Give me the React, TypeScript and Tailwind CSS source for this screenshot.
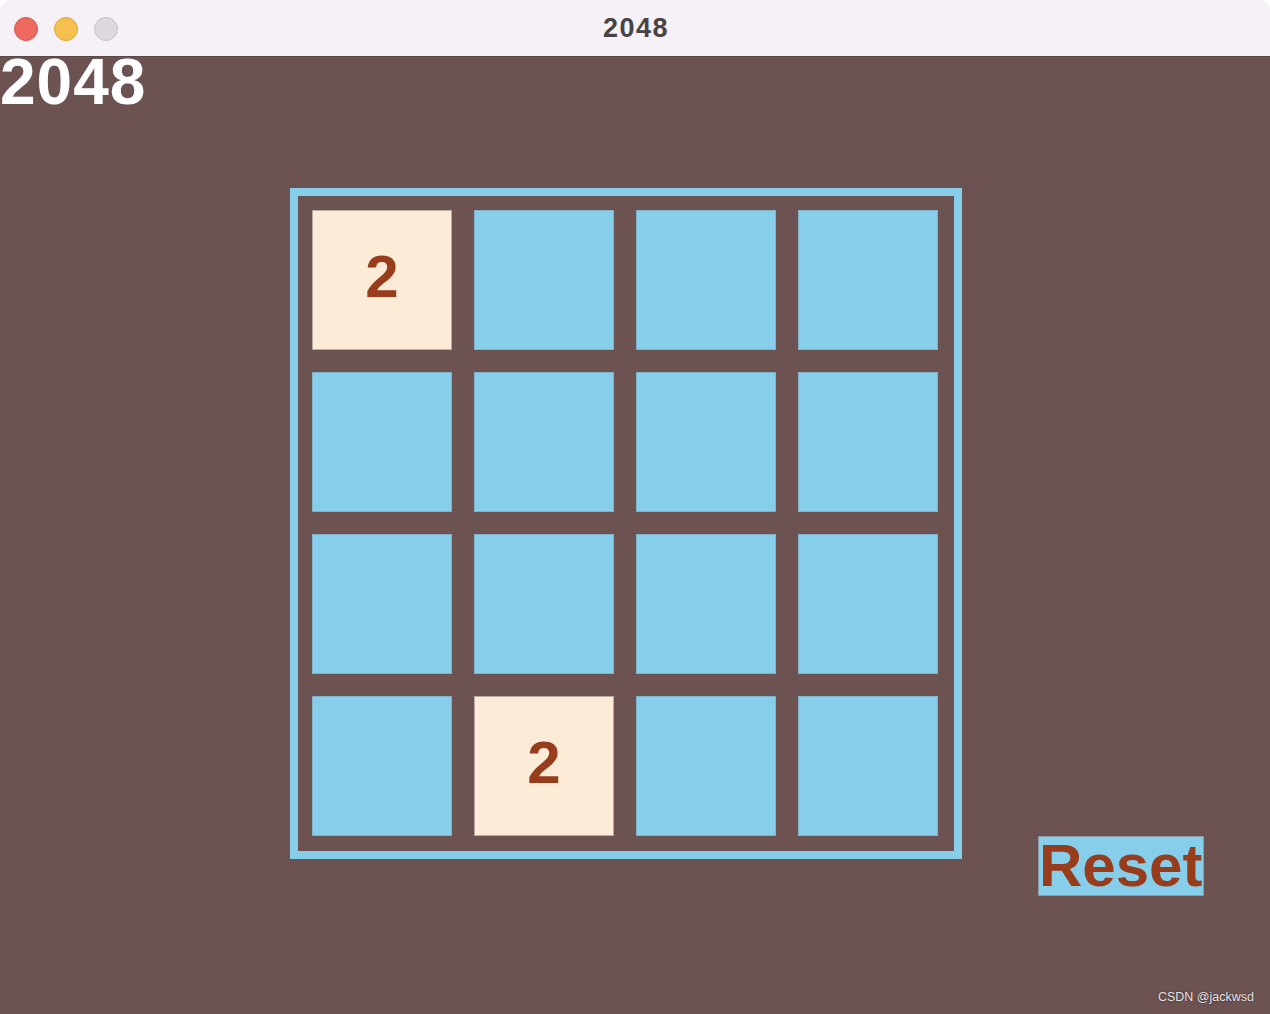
import React from 'react';

const board: number[][] = [
  [2, 0, 0, 0],
  [0, 0, 0, 0],
  [0, 0, 0, 0],
  [0, 2, 0, 0],
];

const Tile: React.FC<{ value: number }> = ({ value }) => {
  if (!value) {
    return <div className="w-[140px] h-[140px] bg-[#87ceeb] border border-[#7fb3cb]" />;
  }
  return (
    <div className="w-[140px] h-[140px] bg-[#fbebd7] border border-[#b9a9a4] flex items-center justify-center pb-[7px]">
      <span className="text-[60px] leading-none font-bold text-[#973d1c]">{value}</span>
    </div>
  );
};

export default function App() {
  return (
    <div className="w-[1270px] h-[1014px] bg-white overflow-hidden" style={{ fontFamily: '"Liberation Sans", Arial, sans-serif' }}>
      <div className="relative w-full h-full rounded-t-[10px] overflow-hidden flex flex-col">
        {/* Title bar */}
        <div className="h-[57px] shrink-0 bg-[#f6f1f6] border-b border-[#5b4646] flex items-center relative">
          <div className="flex items-center gap-[16px] pl-[14px] pt-[1px]">
            <span className="w-[24px] h-[24px] rounded-full bg-[#ee6a5f] border border-[#d9584e]" />
            <span className="w-[24px] h-[24px] rounded-full bg-[#f5c04f] border border-[#dca83d]" />
            <span className="w-[24px] h-[24px] rounded-full bg-[#dcd8de] border border-[#c6c1c8]" />
          </div>
          <div className="absolute inset-0 flex items-center justify-center pointer-events-none">
            <span className="text-[27px] font-bold text-[#464446] tracking-[1.5px] pl-[2px]">2048</span>
          </div>
        </div>

        {/* Content */}
        <div className="flex-1 bg-[#6d5252] flex flex-col relative">
          <h1 className="text-[64px] leading-[50px] font-bold text-white tracking-[1px]">2048</h1>

          <div className="flex items-start">
            <div className="ml-[290px] mt-[81px] border-8 border-[#87ceeb] pt-[14px] pl-[14px] pr-[16px] pb-[15px]">
              <div className="grid grid-cols-4 gap-[22px]">
                {board.flat().map((v, i) => (
                  <Tile key={i} value={v} />
                ))}
              </div>
            </div>

            <button className="ml-[76px] mt-[729px] w-[166px] h-[60px] bg-[#87ceeb] border border-[#8a9aa6] text-[60px] leading-[52px] font-bold text-[#973d1c] text-left whitespace-nowrap overflow-visible">
              Reset
            </button>
          </div>

          <span className="absolute right-[16px] bottom-[7px] text-[12.5px] text-[#e8e4e4] [text-shadow:0_0_2px_rgba(0,0,0,0.6)]">
            CSDN @jackwsd
          </span>
        </div>
      </div>
    </div>
  );
}
